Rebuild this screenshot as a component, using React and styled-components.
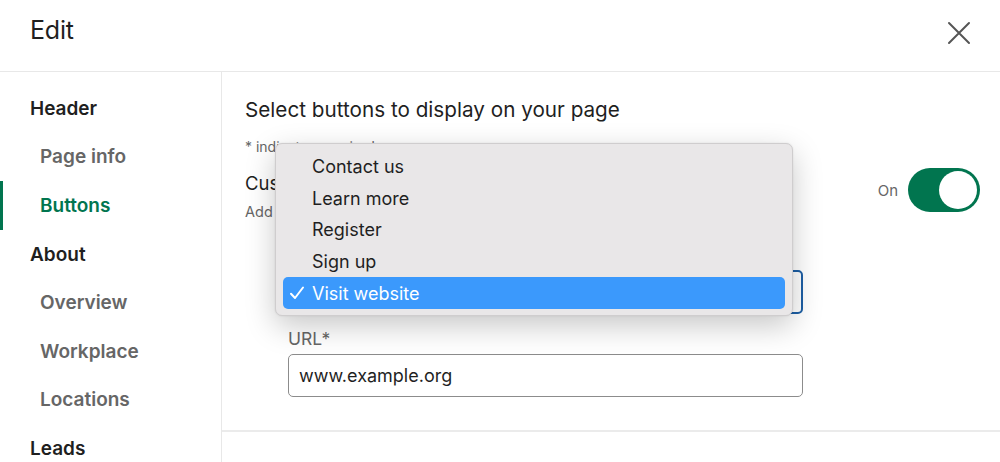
import React from 'react';
import styled, { createGlobalStyle } from 'styled-components';

const GlobalStyle = createGlobalStyle`
  html, body {
    margin: 0;
    padding: 0;
    background: #ffffff;
  }
  body {
    font-family: Inter, "Noto Sans", "Liberation Sans", sans-serif;
    color: #1f1f1f;
  }
`;

const Modal = styled.div`
  width: 1000px;
  height: 462px;
  overflow: hidden;
  display: flex;
  flex-direction: column;
  background: #fff;
`;

const TopBar = styled.div`
  height: 72px;
  flex-shrink: 0;
  display: flex;
  align-items: center;
  justify-content: space-between;
  padding: 0 30px;
  border-bottom: 1px solid #e8e8e8;
  box-sizing: border-box;
`;

const Title = styled.h1`
  margin: -11px 0 0;
  font-size: 25px;
  font-weight: 400;
  color: #1f1f1f;
  letter-spacing: -0.2px;
`;

const CloseButton = styled.button`
  border: 0;
  background: none;
  padding: 0;
  width: 24px;
  height: 24px;
  display: flex;
  align-items: center;
  justify-content: center;
  margin: -6px -1px 0 0;
  cursor: pointer;

  svg {
    display: block;
  }
`;

const Body = styled.div`
  flex: 1;
  display: grid;
  grid-template-columns: 222px 1fr;
  min-height: 0;
`;

const Sidebar = styled.nav`
  border-right: 1px solid #e8e8e8;
  padding-top: 12px;
`;

const NavItem = styled.div`
  position: relative;
  height: 48.6px;
  display: flex;
  align-items: center;
  padding-left: ${(p) => (p.$sub ? '40px' : '30px')};
  font-size: 19px;
  font-weight: 600;
  color: ${(p) => (p.$active ? '#01754f' : p.$sub ? '#666666' : '#1f1f1f')};

  &::before {
    content: '';
    display: ${(p) => (p.$active ? 'block' : 'none')};
    position: absolute;
    left: 0;
    top: 0;
    bottom: 0;
    width: 3px;
    background: #01754f;
  }
`;

const Main = styled.section`
  display: flex;
  flex-direction: column;
`;

const Content = styled.div`
  padding: 25px 20px 0 23px;
  height: 360px;
  box-sizing: border-box;
  border-bottom: 2px solid #ebebeb;
`;

const SectionTitle = styled.h2`
  margin: 0;
  font-size: 20.7px;
  font-weight: 400;
  color: #1f1f1f;
  line-height: 26px;
`;

const Hint = styled.p`
  margin: 15px 0 0;
  font-size: 14px;
  color: #666;
  line-height: 18px;
`;

const ToggleRow = styled.div`
  display: flex;
  align-items: flex-start;
  justify-content: space-between;
  margin-top: 12px;
`;

const ToggleText = styled.div`
  display: flex;
  flex-direction: column;
  padding-top: 3px;
`;

const RowTitle = styled.div`
  font-size: 18.5px;
  color: #1f1f1f;
  line-height: 24px;
`;

const RowDesc = styled.div`
  font-size: 14.5px;
  color: #666;
  line-height: 18px;
  margin-top: 8px;
`;

const SwitchWrap = styled.div`
  display: flex;
  align-items: center;
  gap: 10px;
  font-size: 15px;
  color: #666;
`;

const Switch = styled.div`
  width: 72px;
  height: 44px;
  border-radius: 22px;
  background: #01754f;
  display: flex;
  align-items: center;
  justify-content: flex-end;
  padding: 0 3px;
  box-sizing: border-box;
`;

const Knob = styled.div`
  width: 38px;
  height: 38px;
  border-radius: 50%;
  background: #fff;
`;

const Form = styled.div`
  margin-left: 43px;
  width: 515px;
  margin-top: 23px;
`;

const Label = styled.div`
  font-size: 17.5px;
  color: #666;
  line-height: 22px;
  margin-bottom: 4px;
`;

const SelectWrap = styled.div`
  position: relative;
  margin-bottom: 14px;
`;

const SelectBox = styled.div`
  height: 44px;
  border: 2px solid #1d5fa5;
  border-radius: 5px;
  box-sizing: border-box;
  display: flex;
  align-items: center;
  padding-left: 10px;
  font-size: 18px;
`;

const Input = styled.div`
  height: 43px;
  border: 1px solid #8c8c8c;
  border-radius: 5px;
  box-sizing: border-box;
  display: flex;
  align-items: center;
  padding-left: 10px;
  font-size: 18px;
  color: #1f1f1f;
`;

const Menu = styled.ul`
  position: absolute;
  left: -13px;
  top: -127px;
  width: 518px;
  margin: 0;
  padding: 7px 7px 6px;
  list-style: none;
  box-sizing: border-box;
  background: #e9e7e8;
  border: 1px solid #cfcdce;
  border-radius: 7px;
  box-shadow: 0 10px 30px rgba(0, 0, 0, 0.22), 0 0 2px rgba(0, 0, 0, 0.1);
`;

const MenuItem = styled.li`
  position: relative;
  height: 31.6px;
  display: flex;
  align-items: center;
  padding-left: 29px;
  border-radius: 5px;
  font-size: 18px;
  color: ${(p) => (p.$selected ? '#ffffff' : '#1f1f1f')};
  background: ${(p) => (p.$selected ? '#3b99fc' : 'transparent')};

  svg {
    position: absolute;
    left: 6px;
    top: 50%;
    transform: translateY(-50%);
  }
`;

const sidebarItems = [
  { label: 'Header' },
  { label: 'Page info', sub: true },
  { label: 'Buttons', sub: true, active: true },
  { label: 'About' },
  { label: 'Overview', sub: true },
  { label: 'Workplace', sub: true },
  { label: 'Locations', sub: true },
  { label: 'Leads' },
];

const options = ['Contact us', 'Learn more', 'Register', 'Sign up', 'Visit website'];

const CheckIcon = () => (
  <svg width="16" height="16" viewBox="0 0 16 16" fill="none">
    <path d="M2 8.8 L6 13 L14 2.5" stroke="#fff" strokeWidth="2" strokeLinecap="round" strokeLinejoin="round" />
  </svg>
);

export default function App() {
  return (
    <>
      <GlobalStyle />
      <Modal>
        <TopBar>
          <Title>Edit</Title>
          <CloseButton aria-label="Close">
            <svg width="24" height="24" viewBox="0 0 24 24">
              <path d="M2 2 L22 22 M22 2 L2 22" stroke="#555" strokeWidth="2" strokeLinecap="round" />
            </svg>
          </CloseButton>
        </TopBar>
        <Body>
          <Sidebar>
            {sidebarItems.map((item) => (
              <NavItem key={item.label} $sub={item.sub} $active={item.active}>
                {item.label}
              </NavItem>
            ))}
          </Sidebar>
          <Main>
            <Content>
              <SectionTitle>Select buttons to display on your page</SectionTitle>
              <Hint>* indicates required</Hint>
              <ToggleRow>
                <ToggleText>
                  <RowTitle>Custom button</RowTitle>
                  <RowDesc>Add a custom button that visitors will see at the top of your page</RowDesc>
                </ToggleText>
                <SwitchWrap>
                  On
                  <Switch>
                    <Knob />
                  </Switch>
                </SwitchWrap>
              </ToggleRow>
              <Form>
                <Label>Button*</Label>
                <SelectWrap>
                  <SelectBox>Visit website</SelectBox>
                  <Menu>
                    {options.map((opt) => (
                      <MenuItem key={opt} $selected={opt === 'Visit website'}>
                        {opt === 'Visit website' && <CheckIcon />}
                        {opt}
                      </MenuItem>
                    ))}
                  </Menu>
                </SelectWrap>
                <Label>URL*</Label>
                <Input>www.example.org</Input>
              </Form>
            </Content>
          </Main>
        </Body>
      </Modal>
    </>
  );
}
